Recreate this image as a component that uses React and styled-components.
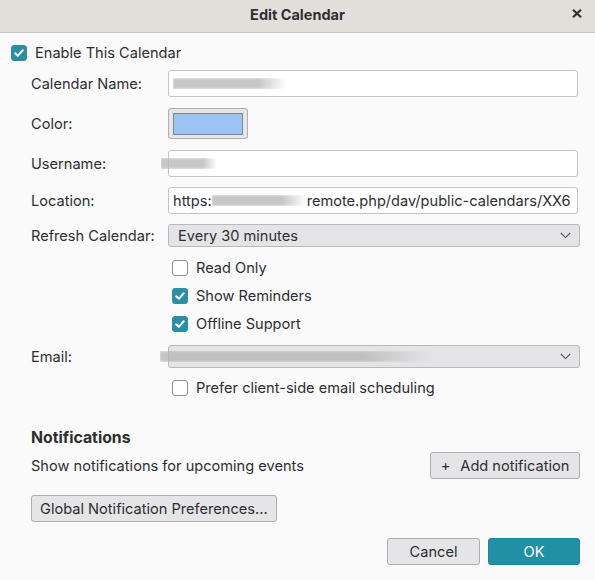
import React from "react";
import styled, { createGlobalStyle } from "styled-components";

const Global = createGlobalStyle`
  html, body { margin: 0; padding: 0; background: #fafafa; }
  body { font-family: Inter, "Noto Sans", "Liberation Sans", sans-serif; color: #2e2e30; }
  * { box-sizing: border-box; }
`;

const Dialog = styled.div`
  width: 595px;
  height: 580px;
  background: #fafafa;
  display: flex;
  flex-direction: column;
  overflow: hidden;
`;

const TitleBar = styled.div`
  height: 33px;
  flex: none;
  background: #e2dfdb;
  border-bottom: 1px solid #c9c5c0;
  display: flex;
  align-items: center;
  justify-content: center;
  position: relative;
`;

const Title = styled.div`
  font-weight: 700;
  font-size: 14.5px;
  color: #2e3032;
  margin-top: -4px;
`;

const CloseBtn = styled.div`
  position: absolute;
  right: 13px;
  top: 9px;
  width: 10px;
  height: 10px;
  display: flex;
`;

const Body = styled.div`
  padding: 8px 17px 0 11px;
  display: flex;
  flex-direction: column;
  font-size: 14.6px;
`;

const CheckRow = styled.label`
  display: flex;
  align-items: center;
  gap: 8px;
  height: 24px;
  margin-top: ${(p) => p.$mt || 0}px;
  margin-left: ${(p) => p.$indent || 0}px;
`;

const Box = styled.span`
  width: 16px;
  height: 16px;
  border-radius: 3px;
  flex: none;
  display: flex;
  align-items: center;
  justify-content: center;
  background: ${(p) => (p.$checked ? "#2a8fa4" : "#ffffff")};
  border: 1px solid ${(p) => (p.$checked ? "#2a8fa4" : "#8f8f94")};
`;

const Row = styled.div`
  display: flex;
  align-items: center;
  height: ${(p) => p.$h}px;
  margin-top: ${(p) => p.$mt || 0}px;
  padding-left: 20px;
`;

const Label = styled.div`
  width: 137px;
  flex: none;
`;

const Input = styled.div`
  flex: 1;
  min-width: 0;
  height: 100%;
  background: #ffffff;
  border: 1px solid #c4c4c6;
  border-radius: 3px;
  display: flex;
  align-items: center;
  padding-left: 4px;
  white-space: nowrap;
  overflow: ${(p) => (p.$clip ? "hidden" : "visible")};
`;

const Smear = styled.span`
  display: inline-block;
  flex: none;
  width: ${(p) => p.$w}px;
  height: 11px;
  margin-left: ${(p) => p.$ml || 0}px;
  margin-right: 1px;
  background: repeating-linear-gradient(
    90deg,
    #8c8c8c 0 1px,
    #c9c9c9 1px 3px
  );
  opacity: 0.75;
  filter: blur(1.1px);
  -webkit-mask-image: linear-gradient(90deg, #000 70%, transparent);
  mask-image: linear-gradient(90deg, #000 75%, transparent);
`;

const Select = styled.div`
  flex: 1;
  margin-right: -2px;
  height: 100%;
  background: #e4e4e6;
  border: 1px solid #b9b9bd;
  border-radius: 3px;
  display: flex;
  align-items: center;
  justify-content: space-between;
  padding: 0 8px 0 9px;
`;

const ColorButton = styled.div`
  width: 80px;
  height: 31px;
  background: #e6e6e8;
  border: 1px solid #aeaeb2;
  border-radius: 3px;
  display: flex;
  align-items: center;
  justify-content: center;
`;

const Swatch = styled.div`
  width: 70px;
  height: 22px;
  background: #9cc3f3;
  border: 1px solid #86868a;
`;

const Heading = styled.div`
  font-weight: 700;
  font-size: 15.8px;
  height: 20px;
  display: flex;
  align-items: center;
  margin-top: 27px;
  padding-left: 20px;
`;

const NotifyRow = styled.div`
  display: flex;
  align-items: center;
  justify-content: space-between;
  margin-top: 5px;
  padding-left: 20px;
  margin-right: -2px;
`;

const Button = styled.div`
  height: 27px;
  width: ${(p) => (p.$w ? `${p.$w}px` : "auto")};
  padding: 0 8px;
  display: inline-flex;
  align-items: center;
  justify-content: center;
  gap: 10px;
  border-radius: 3px;
  background: ${(p) => (p.$primary ? "#2190a4" : "#e5e5e7")};
  color: ${(p) => (p.$primary ? "#ffffff" : "#2e2e30")};
  border: 1px solid ${(p) => (p.$primary ? "#1f8598" : "#aeaeb2")};
`;

const GlobalRow = styled.div`
  margin-top: 16px;
  padding-left: 20px;
  display: flex;
`;

const Footer = styled.div`
  margin-top: 16px;
  margin-right: -2px;
  display: flex;
  justify-content: flex-end;
  gap: 8px;
`;

const Check = () => (
  <svg width="12" height="12" viewBox="0 0 12 12">
    <path d="M2.2 6.3 L4.8 8.8 L9.8 3.2" fill="none" stroke="#fff" strokeWidth="2" strokeLinecap="round" strokeLinejoin="round" />
  </svg>
);

const Chevron = () => (
  <svg width="11" height="7" viewBox="0 0 11 7">
    <path d="M0.8 1 L5.5 5.6 L10.2 1" fill="none" stroke="#555" strokeWidth="1.1" />
  </svg>
);

const CheckItem = ({ checked, children, indent, mt }) => (
  <CheckRow $indent={indent} $mt={mt}>
    <Box $checked={checked}>{checked && <Check />}</Box>
    {children}
  </CheckRow>
);

export default function App() {
  return (
    <>
      <Global />
      <Dialog>
        <TitleBar>
          <Title>Edit Calendar</Title>
          <CloseBtn>
            <svg width="10" height="9" viewBox="0 0 10 9">
              <path d="M1 0.8 L9 8.2 M9 0.8 L1 8.2" stroke="#2e3032" strokeWidth="2.2" />
            </svg>
          </CloseBtn>
        </TitleBar>
        <Body>
          <CheckItem checked>Enable This Calendar</CheckItem>
          <Row $h={27} $mt={5}>
            <Label>Calendar Name:</Label>
            <Input>
              <Smear $w={114} />
            </Input>
          </Row>
          <Row $h={31} $mt={11}>
            <Label>Color:</Label>
            <ColorButton>
              <Swatch />
            </ColorButton>
          </Row>
          <Row $h={27} $mt={11}>
            <Label>Username:</Label>
            <Input>
              <Smear $w={56} $ml={-12} />
            </Input>
          </Row>
          <Row $h={27} $mt={10}>
            <Label>Location:</Label>
            <Input $clip>
              https:
              <Smear $w={94} />
              remote.php/dav/public-calendars/XX6
            </Input>
          </Row>
          <Row $h={23} $mt={10}>
            <Label>Refresh Calendar:</Label>
            <Select>
              Every 30 minutes
              <Chevron />
            </Select>
          </Row>
          <CheckItem indent={161} mt={9}>Read Only</CheckItem>
          <CheckItem indent={161} mt={4} checked>Show Reminders</CheckItem>
          <CheckItem indent={161} mt={4} checked>Offline Support</CheckItem>
          <Row $h={23} $mt={9}>
            <Label>Email:</Label>
            <Select>
              <Smear $w={272} $ml={-18} />
              <Chevron />
            </Select>
          </Row>
          <CheckItem indent={161} mt={8}>Prefer client-side email scheduling</CheckItem>
          <Heading>Notifications</Heading>
          <NotifyRow>
            Show notifications for upcoming events
            <Button $w={150}>
              <span>+</span>
              <span>Add notification</span>
            </Button>
          </NotifyRow>
          <GlobalRow>
            <Button>Global Notification Preferences...</Button>
          </GlobalRow>
          <Footer>
            <Button $w={93}>Cancel</Button>
            <Button $w={92} $primary>OK</Button>
          </Footer>
        </Body>
      </Dialog>
    </>
  );
}
